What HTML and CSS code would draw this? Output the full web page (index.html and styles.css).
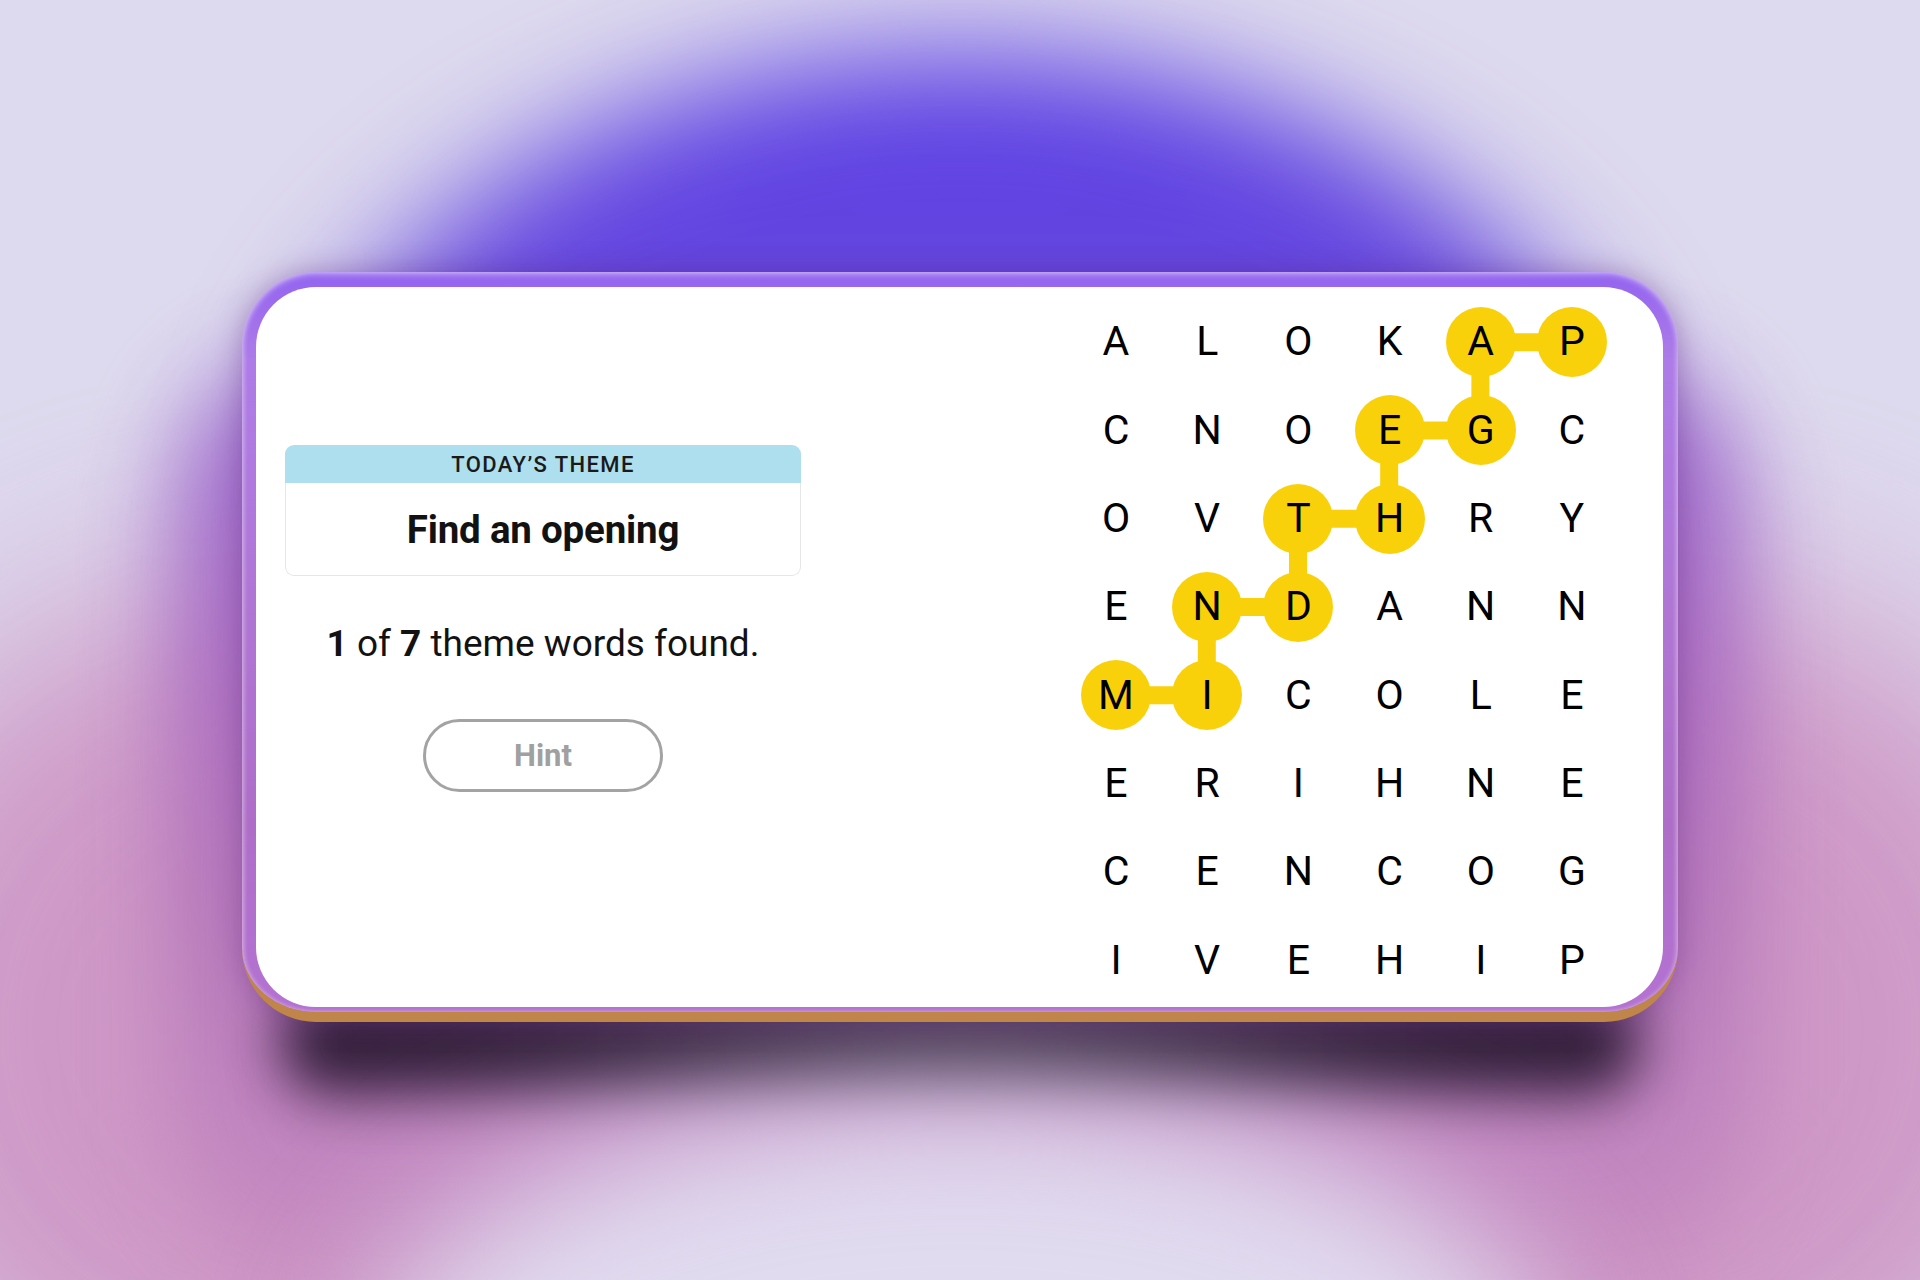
FILE: index.html
```html
<!DOCTYPE html>
<html lang="en">
<head>
<meta charset="utf-8">
<title>Strands</title>
<link rel="stylesheet" href="styles.css">
</head>
<body>
<div class="stage">
  <div class="glow glow-arch"></div>
  <div class="glow glow-low"></div>
  <div class="glow glow-side"></div>
  <div class="glow glow-shadow"></div>
  <div class="glow glow-light"></div>
  <div class="device">
    <div class="screen">
      <section class="panel">
        <div class="theme">
          <div class="theme-head">TODAY’S THEME</div>
          <div class="theme-body">Find an opening</div>
        </div>
        <p class="progress"><b>1</b> of <b>7</b> theme words found.</p>
        <button class="hint" type="button">Hint</button>
      </section>
      <div class="board">
        <svg class="links" viewBox="0 0 547.2 706.4" aria-hidden="true">
          <polyline points="45.6,397.35 136.8,397.35 136.8,309.05 228,309.05 228,220.75 319.2,220.75 319.2,132.45 410.4,132.45 410.4,44.15 501.6,44.15" />
        </svg>
        <div class="cell"><span class="l">A</span></div>
        <div class="cell"><span class="l">L</span></div>
        <div class="cell"><span class="l">O</span></div>
        <div class="cell"><span class="l">K</span></div>
        <div class="cell on"><span class="l">A</span></div>
        <div class="cell on"><span class="l">P</span></div>

        <div class="cell"><span class="l">C</span></div>
        <div class="cell"><span class="l">N</span></div>
        <div class="cell"><span class="l">O</span></div>
        <div class="cell on"><span class="l">E</span></div>
        <div class="cell on"><span class="l">G</span></div>
        <div class="cell"><span class="l">C</span></div>

        <div class="cell"><span class="l">O</span></div>
        <div class="cell"><span class="l">V</span></div>
        <div class="cell on"><span class="l">T</span></div>
        <div class="cell on"><span class="l">H</span></div>
        <div class="cell"><span class="l">R</span></div>
        <div class="cell"><span class="l">Y</span></div>

        <div class="cell"><span class="l">E</span></div>
        <div class="cell on"><span class="l">N</span></div>
        <div class="cell on"><span class="l">D</span></div>
        <div class="cell"><span class="l">A</span></div>
        <div class="cell"><span class="l">N</span></div>
        <div class="cell"><span class="l">N</span></div>

        <div class="cell on"><span class="l">M</span></div>
        <div class="cell on"><span class="l">I</span></div>
        <div class="cell"><span class="l">C</span></div>
        <div class="cell"><span class="l">O</span></div>
        <div class="cell"><span class="l">L</span></div>
        <div class="cell"><span class="l">E</span></div>

        <div class="cell"><span class="l">E</span></div>
        <div class="cell"><span class="l">R</span></div>
        <div class="cell"><span class="l">I</span></div>
        <div class="cell"><span class="l">H</span></div>
        <div class="cell"><span class="l">N</span></div>
        <div class="cell"><span class="l">E</span></div>

        <div class="cell"><span class="l">C</span></div>
        <div class="cell"><span class="l">E</span></div>
        <div class="cell"><span class="l">N</span></div>
        <div class="cell"><span class="l">C</span></div>
        <div class="cell"><span class="l">O</span></div>
        <div class="cell"><span class="l">G</span></div>

        <div class="cell"><span class="l">I</span></div>
        <div class="cell"><span class="l">V</span></div>
        <div class="cell"><span class="l">E</span></div>
        <div class="cell"><span class="l">H</span></div>
        <div class="cell"><span class="l">I</span></div>
        <div class="cell"><span class="l">P</span></div>
      </div>
    </div>
  </div>
</div>
</body>
</html>
```

FILE: styles.css
```css
* { box-sizing: border-box; }

html, body {
  margin: 0;
  padding: 0;
  width: 1920px;
  height: 1280px;
  overflow: hidden;
  background: #ddd9ee;
  font-family: Roboto, "Liberation Sans", sans-serif;
}

.stage {
  position: relative;
  width: 1920px;
  height: 1280px;
  overflow: hidden;
  isolation: isolate;
  display: flex;
  justify-content: center;
  align-items: flex-start;
  padding-top: 272px;
}

.glow {
  position: absolute;
  z-index: 0;
  pointer-events: none;
}

.glow-arch {
  left: 270px;
  top: 53px;
  width: 1380px;
  height: 1500px;
  border-radius: 690px 690px 0 0 / 508px 508px 0 0;
  background: linear-gradient(180deg, #5a3de6 0%, #6245e0 12%, #6c4ad8 24%, #8a56ca 38%, #a464bc 55%, #b470b6 75%, #c07cb8 100%);
  filter: blur(60px);
}

.glow-low {
  left: -180px;
  top: 580px;
  width: 2280px;
  height: 900px;
  border-radius: 450px;
  background: #cd92c2;
  filter: blur(100px);
  opacity: 0.9;
}

.glow-side {
  left: 175px;
  top: 360px;
  width: 1570px;
  height: 900px;
  border-radius: 140px;
  background: linear-gradient(180deg, #9a66d0 0%, #a666c0 35%, #b070b8 62%, #c88ec2 100%);
  filter: blur(48px);
  opacity: 0.9;
}

.glow-shadow {
  left: 280px;
  top: 990px;
  width: 1360px;
  height: 105px;
  border-radius: 50px;
  background: linear-gradient(90deg, #27162f 0%, #352640 50%, #27162f 100%);
  filter: blur(28px);
  opacity: 0.92;
}

.glow-light {
  left: 360px;
  top: 1095px;
  width: 1200px;
  height: 600px;
  border-radius: 50%;
  background: #e0dbef;
  filter: blur(70px);
}

.device {
  position: relative;
  z-index: 1;
  width: 1436px;
  height: 750px;
  padding: 15px 15px 5px 14px;
  border-radius: 74px;
  border-bottom: 10px solid #c08548;
  background: linear-gradient(180deg, #9263f0 0%, #ae7ce8 12%, #b076d4 45%, #ae6ec8 75%, #b472d2 100%);
  box-shadow: inset 0 3px 6px rgba(255, 255, 255, 0.35), inset 2px 0 4px rgba(255, 255, 255, 0.25), inset -2px 0 4px rgba(255, 255, 255, 0.2), 0 0 28px rgba(80, 30, 110, 0.35);
}

.screen {
  width: 1407px;
  height: 720px;
  background: #ffffff;
  border-radius: 60px;
  display: flex;
  align-items: flex-start;
  overflow: hidden;
}

.panel {
  width: 516px;
  margin-left: 29px;
  padding-top: 158px;
  display: flex;
  flex-direction: column;
  align-items: center;
}

.theme {
  width: 516px;
}

.theme-head {
  height: 38px;
  background: #aedfee;
  border-radius: 9px 9px 0 0;
  display: flex;
  align-items: center;
  justify-content: center;
  font-size: 22px;
  font-weight: 500;
  letter-spacing: 1.4px;
  color: #1a1a1a;
  padding-top: 1px;
}

.theme-body {
  height: 93px;
  border: 1.5px solid #e6e6e6;
  border-top: none;
  border-radius: 0 0 9px 9px;
  display: flex;
  align-items: center;
  justify-content: center;
  font-size: 38.5px;
  font-weight: 700;
  color: #121212;
  letter-spacing: -0.2px;
}

.progress {
  margin: 48px 0 0;
  height: 40px;
  line-height: 40px;
  font-size: 37px;
  color: #121212;
  white-space: nowrap;
}

.progress b {
  font-weight: 700;
}

.hint {
  margin-top: 55px;
  width: 240px;
  height: 73px;
  border: 3px solid #a3a3a3;
  border-radius: 37px;
  background: #ffffff;
  font-family: Roboto, "Liberation Sans", sans-serif;
  font-size: 31px;
  font-weight: 700;
  color: #a0a0a0;
  padding: 0;
}

.board {
  position: relative;
  margin-left: 269.4px;
  margin-top: 10.85px;
  display: grid;
  grid-template-columns: repeat(6, 91.2px);
  grid-template-rows: repeat(8, 88.3px);
}

.links {
  position: absolute;
  left: 0;
  top: 0;
  width: 547.2px;
  height: 706.4px;
  z-index: 0;
  overflow: visible;
}

.links polyline {
  fill: none;
  stroke: #f9d10a;
  stroke-width: 18;
  stroke-linejoin: round;
  stroke-linecap: round;
}

.cell {
  position: relative;
  z-index: 1;
  display: flex;
  align-items: center;
  justify-content: center;
}

.l {
  width: 70px;
  height: 70px;
  border-radius: 50%;
  display: flex;
  align-items: center;
  justify-content: center;
  font-size: 41px;
  font-weight: 400;
  color: #000000;
  line-height: 1;
}

.cell.on .l {
  background: #f9d10a;
}
```
